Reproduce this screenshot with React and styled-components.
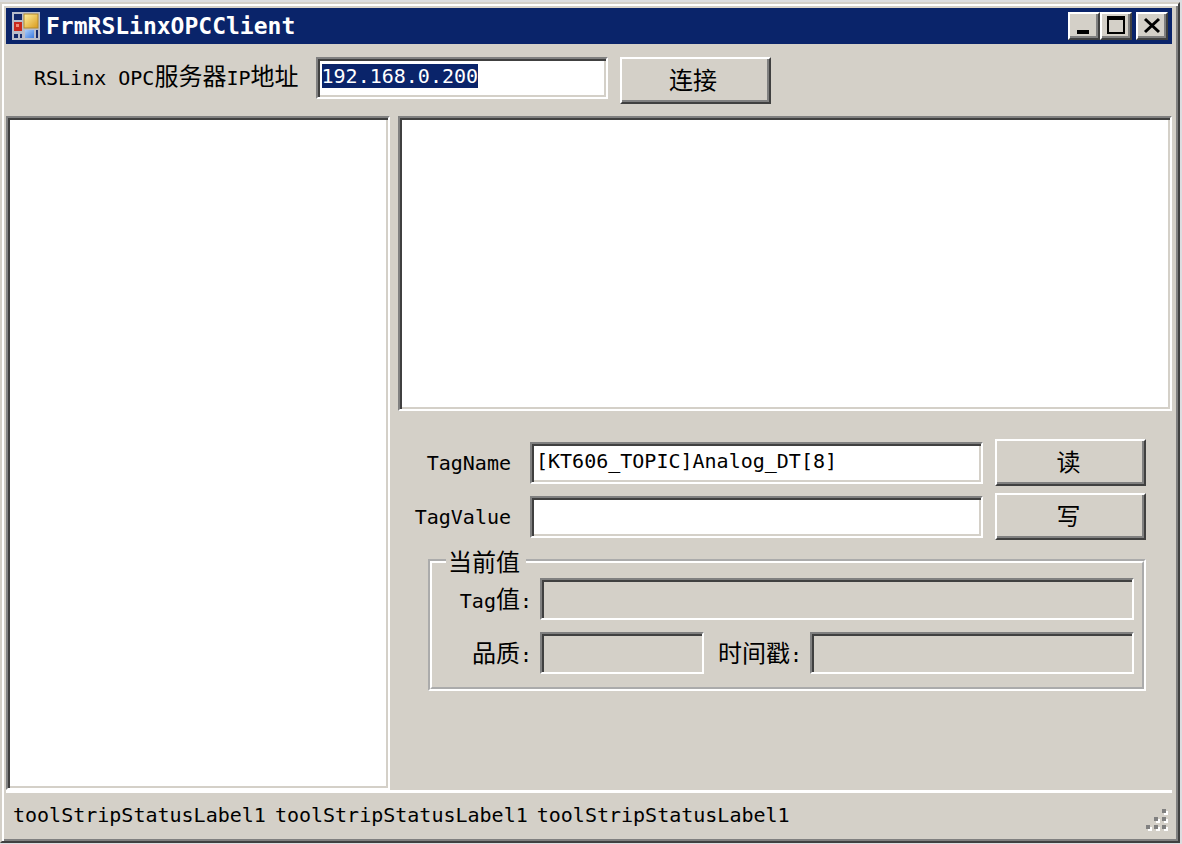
import React, { useEffect, useRef, useState } from 'react';
import styled, { createGlobalStyle, css } from 'styled-components';

const FACE = '#d4d0c8';
const SHADOW = '#808080';
const DARK = '#404040';
const NAVY = '#0a246a';

const GlobalStyle = createGlobalStyle`
  * {
    box-sizing: border-box;
  }

  body {
    margin: 0;
    background: #dcdde0;
    color: #000;
    font-family: 'DejaVu Sans Mono', 'Noto Sans CJK SC', monospace;
    font-size: 20px;
    line-height: 24px;
  }
`;

const sunken = css`
  border: 2px solid;
  border-color: ${SHADOW} #fff #fff ${SHADOW};
  box-shadow: inset 2px 2px ${DARK}, inset -2px -2px ${FACE};
`;

const raised = css`
  border: 2px solid;
  border-color: #fff ${DARK} ${DARK} #fff;
  box-shadow: inset -2px -2px ${SHADOW};
`;

const Window = styled.div`
  display: flex;
  flex-direction: column;
  min-height: calc(100vh - 3px);
  margin: 2px 2px 1px 0;
  padding: 4px 6px 4px 4px;
  background: ${FACE};
  border: 2px solid;
  border-color: ${FACE} ${DARK} ${DARK} ${FACE};
  box-shadow: inset 2px 2px #fff, inset -2px -2px ${SHADOW};
`;

const TitleBar = styled.header`
  display: flex;
  align-items: center;
  height: 36px;
  padding: 0 4px 0 6px;
  background: ${NAVY};
`;

const Title = styled.h1`
  flex: 1;
  margin: 0 0 0 6px;
  color: #fff;
  font-size: 23px;
  font-weight: 700;
  white-space: nowrap;
`;

const CaptionButton = styled.button`
  ${raised}
  display: flex;
  width: 32px;
  height: 28px;
  margin-left: ${(props) => (props.$apart ? '4px' : '0')};
  padding: 0;
  background: ${FACE};

  svg {
    display: block;
  }
`;

const Toolbar = styled.div`
  display: flex;
  align-items: flex-start;
  gap: 12px;
  padding: 13px 28px 12px;
`;

const ToolbarLabel = styled.label`
  padding: 6px 5px 2px 0;
  white-space: nowrap;
`;

const Label = styled.label`
  padding-right: ${(props) => (props.$wide ? '7px' : '0')};
  text-align: right;
  white-space: nowrap;
`;

const Cjk = styled.span`
  font-family: 'Noto Sans CJK SC', sans-serif;
  font-size: 24px;
`;

const TextBox = styled.input`
  ${sunken}
  width: ${(props) => props.$width || '100%'};
  height: 42px;
  min-width: 0;
  padding: 2px 4px 6px;
  background: ${(props) => (props.readOnly ? FACE : '#fff')};
  border-radius: 0;
  outline: none;
  color: #000;
  font: inherit;

  &::selection {
    background: ${NAVY};
    color: #fff;
  }
`;

const Button = styled.button`
  ${raised}
  width: 151px;
  height: 47px;
  padding: 0 4px 4px 0;
  background: ${FACE};
  color: #000;
  font-family: 'Noto Sans CJK SC', sans-serif;
  font-size: 24px;
  line-height: 28px;
`;

const Split = styled.main`
  display: grid;
  flex: 1;
  grid-template-columns: 384px minmax(0, 1fr);
  gap: 8px;
`;

const Pane = styled.section`
  ${sunken}
  min-height: ${(props) => props.$height || '0'};
  background: #fff;
`;

const Side = styled.div`
  display: flex;
  flex-direction: column;
`;

const TagForm = styled.form`
  display: grid;
  grid-template-columns: 108px minmax(0, 1fr) 151px;
  gap: 7px 12px;
  align-items: center;
  padding: 28px 26px 0 12px;
`;

const Group = styled.fieldset`
  margin: 7px 26px 0 30px;
  padding: 3px 8px 13px 0;
  border: 4px groove #fff;
`;

const Legend = styled.legend`
  margin-left: 14px;
  padding: 0 6px 0 2px;
  font-family: 'Noto Sans CJK SC', sans-serif;
  font-size: 24px;
  line-height: 28px;
`;

const Readings = styled.div`
  display: grid;
  grid-template-columns: 100px 164px 90px minmax(0, 1fr);
  gap: 12px 8px;
  align-items: center;
`;

const Span = styled.div`
  display: flex;
  grid-column: span 3;
`;

const StatusBar = styled.footer`
  display: flex;
  align-items: center;
  gap: 9px;
  height: 47px;
  padding: 0 4px 0 7px;
  border-top: 3px solid #fff;
  white-space: nowrap;
`;

const Grip = styled.svg`
  align-self: flex-end;
  margin: 0 0 6px auto;
`;

const AppIcon = () => (
  <svg width="28" height="28" viewBox="0 0 28 28" aria-hidden="true">
    <defs>
      <linearGradient id="gold" x1="0" y1="0" x2="1" y2="1">
        <stop offset="0" stopColor="#fff0a0" />
        <stop offset="1" stopColor="#d99a1c" />
      </linearGradient>
      <linearGradient id="sky" x1="0" y1="0" x2="1" y2="1">
        <stop offset="0" stopColor="#a9cdfb" />
        <stop offset="1" stopColor="#3c7be0" />
      </linearGradient>
    </defs>
    <rect width="28" height="28" fill="#b9bdca" />
    <rect x="2" y="2" width="8" height="6" fill="#14296a" />
    <rect x="2" y="10" width="8" height="9" fill="#c8281c" />
    <rect x="4" y="12" width="3" height="3" fill="#f08a76" />
    <rect x="2" y="22" width="4" height="4" fill="#14296a" />
    <rect x="8" y="22" width="2" height="4" fill="#14296a" />
    <rect x="12" y="2" width="14" height="14" fill="url(#gold)" stroke="#b58a2c" />
    <rect x="13" y="18" width="9" height="8" fill="url(#sky)" />
    <rect x="24" y="18" width="2" height="8" fill="#14296a" />
  </svg>
);

const gripDots = [
  [16, 0],
  [8, 8],
  [16, 8],
  [0, 16],
  [8, 16],
  [16, 16],
];

const statusLabels = ['toolStripStatusLabel1', 'toolStripStatusLabel1', 'toolStripStatusLabel1'];

function App() {
  const [server, setServer] = useState('192.168.0.200');
  const [tagName, setTagName] = useState('[KT606_TOPIC]Analog_DT[8]');
  const [tagValue, setTagValue] = useState('');
  const serverRef = useRef(null);

  useEffect(() => {
    serverRef.current.focus();
    serverRef.current.select();
  }, []);

  return (
    <>
      <GlobalStyle />
      <Window>
        <TitleBar>
          <AppIcon />
          <Title>FrmRSLinxOPCClient</Title>
          <CaptionButton aria-label="Minimize">
            <svg width="28" height="24">
              <rect x="7" y="16" width="12" height="4" />
            </svg>
          </CaptionButton>
          <CaptionButton aria-label="Maximize">
            <svg width="28" height="24">
              <path d="M5 2h18v18H5zM7 6v12h14V6z" fillRule="evenodd" />
            </svg>
          </CaptionButton>
          <CaptionButton aria-label="Close" $apart>
            <svg width="28" height="24">
              <path d="M7 5L21 18M21 5L7 18" stroke="#000" strokeWidth="3" />
            </svg>
          </CaptionButton>
        </TitleBar>

        <Toolbar>
          <ToolbarLabel htmlFor="server">
            RSLinx OPC<Cjk>服务器</Cjk>IP<Cjk>地址</Cjk>
          </ToolbarLabel>
          <TextBox
            id="server"
            ref={serverRef}
            $width="292px"
            value={server}
            onChange={(e) => setServer(e.target.value)}
          />
          <Button type="button">连接</Button>
        </Toolbar>

        <Split>
          <Pane />
          <Side>
            <Pane $height="295px" />
            <TagForm onSubmit={(e) => e.preventDefault()}>
              <Label htmlFor="tagName" $wide>TagName</Label>
              <TextBox id="tagName" value={tagName} onChange={(e) => setTagName(e.target.value)} />
              <Button type="button">读</Button>
              <Label htmlFor="tagValue" $wide>TagValue</Label>
              <TextBox id="tagValue" value={tagValue} onChange={(e) => setTagValue(e.target.value)} />
              <Button type="button">写</Button>
            </TagForm>
            <Group>
              <Legend>当前值</Legend>
              <Readings>
                <Label htmlFor="current">Tag<Cjk>值</Cjk>:</Label>
                <Span>
                  <TextBox id="current" readOnly />
                </Span>
                <Label htmlFor="quality"><Cjk>品质</Cjk>:</Label>
                <TextBox id="quality" readOnly />
                <Label htmlFor="timestamp"><Cjk>时间戳</Cjk>:</Label>
                <TextBox id="timestamp" readOnly />
              </Readings>
            </Group>
          </Side>
        </Split>

        <StatusBar>
          {statusLabels.map((text, index) => (
            <span key={index}>{text}</span>
          ))}
          <Grip width="22" height="22" aria-hidden="true">
            {gripDots.map(([x, y]) => (
              <g key={`${x}-${y}`}>
                <rect x={x + 2} y={y + 2} width="4" height="4" fill="#fff" />
                <rect x={x} y={y} width="4" height="4" fill={SHADOW} />
              </g>
            ))}
          </Grip>
        </StatusBar>
      </Window>
    </>
  );
}

export default App;
